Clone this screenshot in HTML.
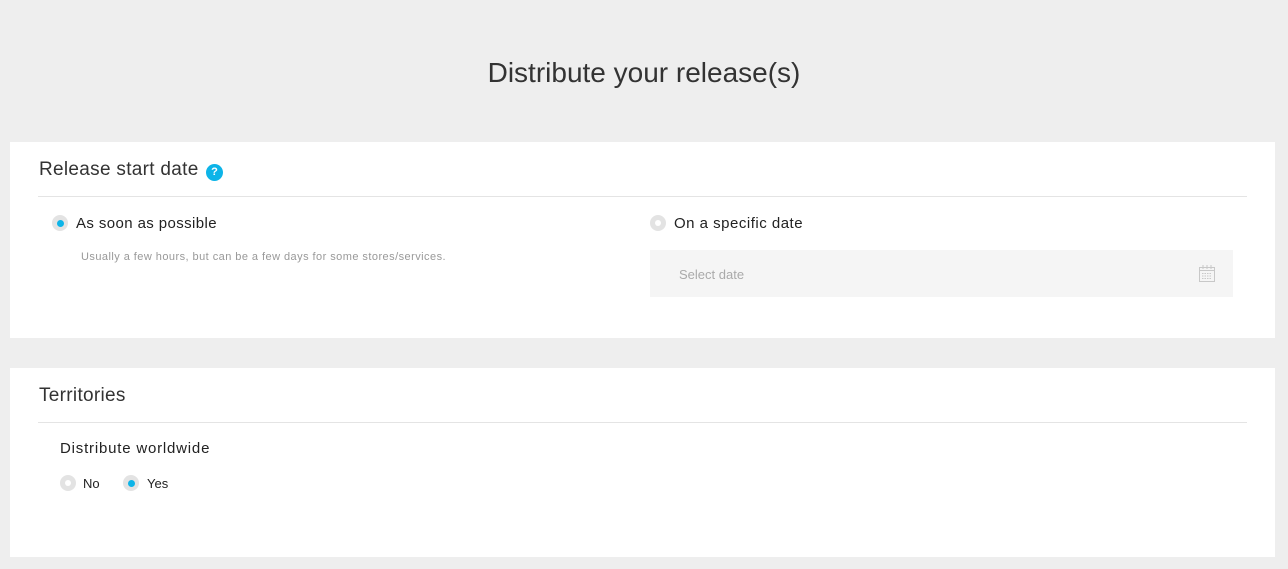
<!DOCTYPE html>
<html><head><style>
*{margin:0;padding:0;box-sizing:border-box}
body{width:1288px;height:569px;background:#eeeeee;font-family:"Liberation Sans",sans-serif;color:#222;position:relative;overflow:hidden}
.a{position:absolute;white-space:nowrap}
.card{position:absolute;left:10px;width:1265px;background:#fff}
.hr{position:absolute;left:28px;width:1209px;height:1px;background:#e4e4e4}
.r{position:absolute;width:16px;height:16px;border-radius:50%;background:#e3e3e3}
.r::after{content:"";position:absolute;left:5px;top:5px;width:6px;height:6px;border-radius:50%;background:#fff}
.r.on::after{background:#0db4e8;left:4.5px;top:4.5px;width:7px;height:7px}
</style></head><body>
<div class="a" style="left:0;width:1288px;text-align:center;top:57px;font-size:28px;font-weight:300;color:#333;letter-spacing:0px">Distribute your release(s)</div>

<div class="card" style="top:142px;height:196px">
  <div class="a" style="left:29px;top:17px;font-size:19px;color:#333;letter-spacing:0.3px">Release start date</div>
  <div class="a" style="left:196px;top:22px;width:17px;height:17px;border-radius:50%;background:#0db4e8;color:#fff;font-size:11px;font-weight:bold;text-align:center;line-height:17px">?</div>
  <div class="hr" style="top:54px"></div>
  <div class="r on" style="left:42px;top:73px"></div>
  <div class="a" style="left:66px;top:73px;font-size:15px;color:#222;letter-spacing:0.4px">As soon as possible</div>
  <div class="a" style="left:71px;top:109px;font-size:11px;color:#999;letter-spacing:0.45px">Usually a few hours, but can be a few days for some stores/services.</div>
  <div class="r" style="left:640px;top:73px"></div>
  <div class="a" style="left:664px;top:73px;font-size:15px;color:#222;letter-spacing:0.5px">On a specific date</div>
  <div class="a" style="left:640px;top:108px;width:583px;height:47px;background:#f5f5f5">
    <div class="a" style="left:29px;top:17px;font-size:13px;color:#aaa">Select date</div>
    <svg class="a" style="left:549px;top:15px" width="16" height="17" viewBox="0 0 16 17" fill="none" stroke="#c8c8c8" stroke-width="1"><rect x="0.5" y="2.5" width="15" height="14"/><line x1="4" y1="0" x2="4" y2="4"/><line x1="8" y1="0" x2="8" y2="4"/><line x1="12" y1="0" x2="12" y2="4"/><line x1="0.5" y1="5.5" x2="15.5" y2="5.5"/><path d="M3 8.5h10M3 11h10M3 13.5h10" stroke-dasharray="1.5 1"/></svg>
  </div>
</div>

<div class="card" style="top:368px;height:189px">
  <div class="a" style="left:29px;top:17px;font-size:19px;color:#333;letter-spacing:0.3px">Territories</div>
  <div class="hr" style="top:54px"></div>
  <div class="a" style="left:50px;top:72px;font-size:15px;color:#222;letter-spacing:0.8px">Distribute worldwide</div>
  <div class="r" style="left:50px;top:107px"></div>
  <div class="a" style="left:73px;top:108px;font-size:13px;color:#222">No</div>
  <div class="r on" style="left:113px;top:107px"></div>
  <div class="a" style="left:137px;top:108px;font-size:13px;color:#222">Yes</div>
</div>
</body></html>
